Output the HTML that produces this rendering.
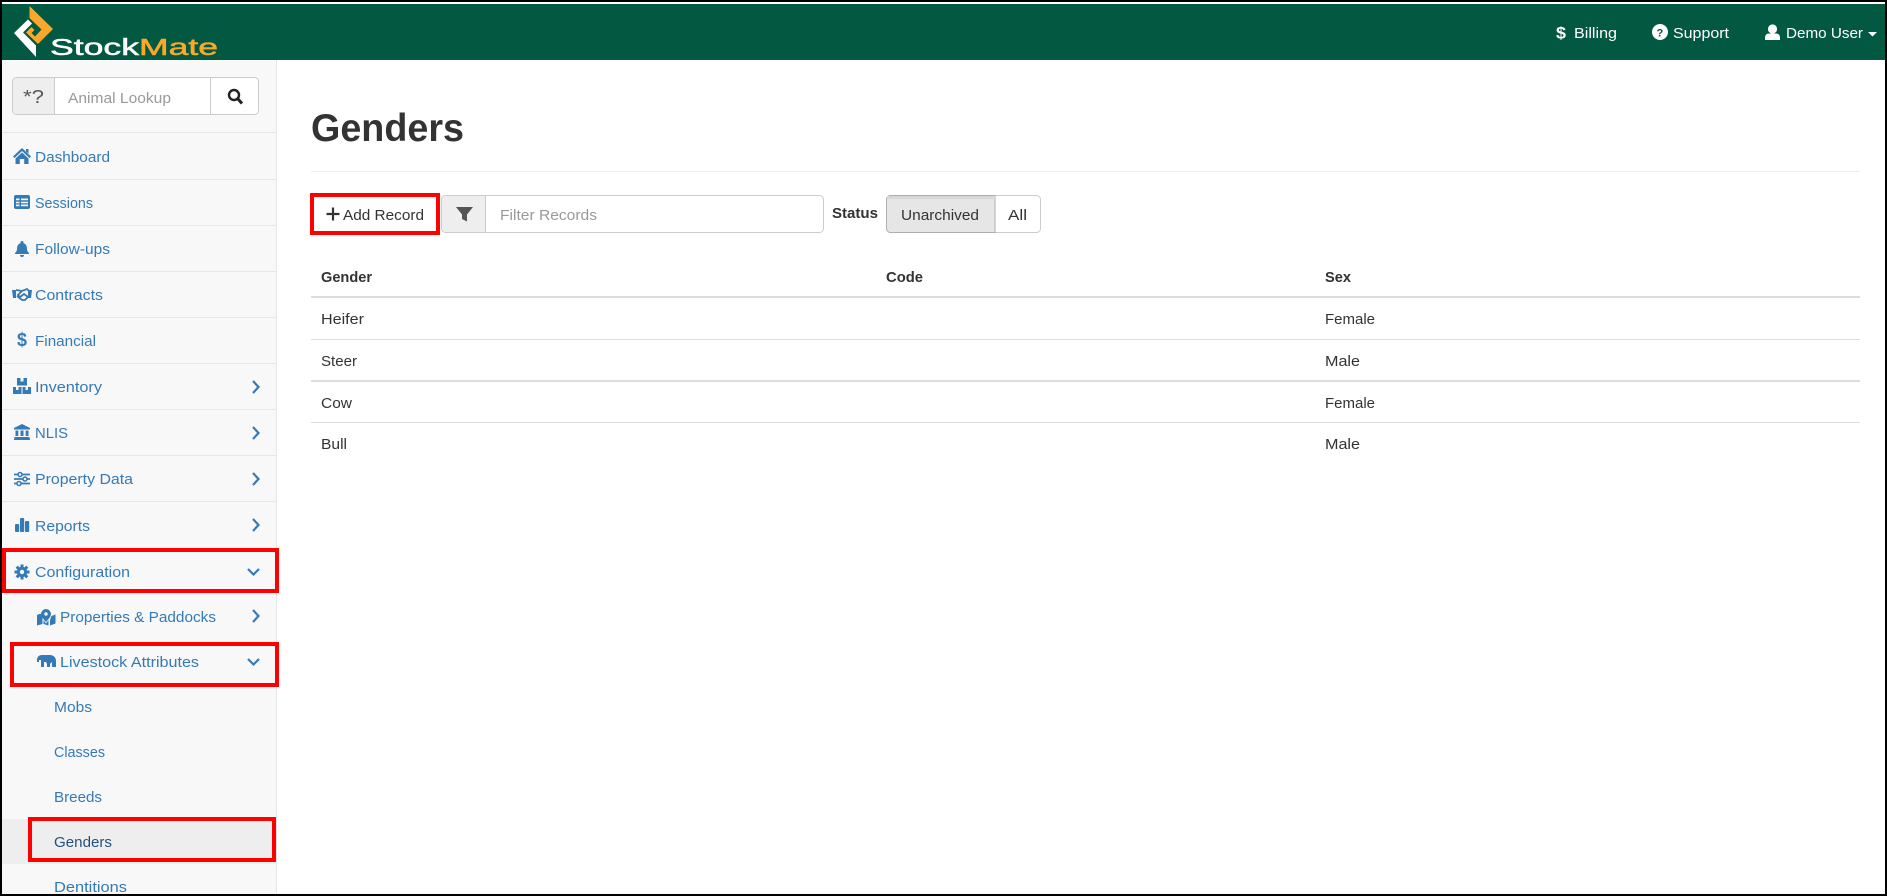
<!DOCTYPE html>
<html lang="en"><head><meta charset="utf-8"><title>Genders</title>
<style>
html,body{margin:0;padding:0;background:#fff;width:1887px;height:896px;overflow:hidden}
svg{display:block}
text{font-family:"Liberation Sans",sans-serif;font-size:15px;white-space:pre}
.n{fill:#337ab7}
.d{fill:#333}
.w{fill:#fff}
.p{fill:#999}
.b{font-weight:700}
.ic{fill:#337ab7}
.ch{fill:none;stroke:#337ab7;stroke-width:2.2}
.r{fill:none;stroke:#f00;stroke-width:4}
</style></head><body>
<svg width="1887" height="896" viewBox="0 0 1887 896" xmlns="http://www.w3.org/2000/svg">
<rect width="1887" height="896" fill="#fff"/>
<!-- header -->
<rect x="2" y="4" width="1883" height="56" fill="#025840"/>
<!-- logo -->
<path d="M29.500 6 L53 29 L38 44 L26 32.500 L31.500 27 L34.500 30 L31.500 33 L35 36.500 L41.500 29.500 L29.500 18 Z" fill="#f9a82b"/>
<path d="M14 33 L28 19.500 L32 23.500 L23 32.500 L36 45.500 L36 57 Z" fill="#fff"/>
<text x="50" y="55" class="w" stroke="#fff" stroke-width=".5" textLength="89" lengthAdjust="spacingAndGlyphs" style="font-size:23px">Stock</text>
<text x="139" y="55" fill="#f9a82b" stroke="#f9a82b" stroke-width=".5" textLength="79" lengthAdjust="spacingAndGlyphs" style="font-size:23px">Mate</text>
<!-- header nav -->
<text x="1556" y="38.500" class="w b" textLength="10" lengthAdjust="spacingAndGlyphs" style="font-size:17px">$</text>
<text x="1574" y="38" class="w" textLength="43" lengthAdjust="spacingAndGlyphs">Billing</text>
<circle cx="1660" cy="32" r="8" fill="#fff"/>
<text x="1656.500" y="36.500" fill="#025840" class="b" style="font-size:11px">?</text>
<text x="1673" y="38" class="w" textLength="56" lengthAdjust="spacingAndGlyphs">Support</text>
<circle cx="1772.500" cy="29" r="4.600" fill="#fff"/>
<path d="M1765 40 v-2 q0 -4.500 4 -4.500 h7 q4 0 4 4.500 v2 z" fill="#fff"/>
<text x="1786" y="38" class="w" textLength="77" lengthAdjust="spacingAndGlyphs">Demo User</text>
<path d="M1868 32 h9 l-4.500 4.500 z" fill="#fff"/>
<!-- sidebar -->
<rect x="2" y="60" width="274" height="834" fill="#f8f8f8"/>
<rect x="276" y="60" width="1" height="834" fill="#e7e7e7"/>
<g fill="#e7e7e7">
<rect x="2" y="132" width="274" height="1"/><rect x="2" y="179" width="274" height="1"/>
<rect x="2" y="225" width="274" height="1"/><rect x="2" y="271" width="274" height="1"/>
<rect x="2" y="317" width="274" height="1"/><rect x="2" y="363" width="274" height="1"/>
<rect x="2" y="409" width="274" height="1"/><rect x="2" y="455" width="274" height="1"/>
<rect x="2" y="501" width="274" height="1"/>
</g>
<!-- search -->
<rect x="12.500" y="77.500" width="246" height="37" rx="4" fill="#fff" stroke="#ccc"/>
<path d="M54 78 H16.500 a4 4 0 0 0 -3.500 3.500 V110 a4 4 0 0 0 3.500 4 H54 Z" fill="#eee"/>
<rect x="54" y="78" width="1" height="36" fill="#ccc"/>
<rect x="210" y="78" width="1" height="36" fill="#ccc"/>
<text x="23" y="103" fill="#555" textLength="21" lengthAdjust="spacingAndGlyphs" style="font-size:18px">*?</text>
<text x="68" y="103" class="p" textLength="103" lengthAdjust="spacingAndGlyphs">Animal Lookup</text>
<circle cx="234" cy="95" r="5" fill="none" stroke="#222" stroke-width="2.400"/>
<path d="M237.500 98.500 L242 103.500" stroke="#222" stroke-width="3" fill="none"/>
<!-- nav icons -->
<path class="ic" d="M22 148 L31 156.500 L29.500 158 L22 151 L14.500 158 L13 156.500 Z M26 149 H28.500 V153.500 L26 151.500 Z M22 152.500 L28.500 158.500 V164 H24.200 V159 H19.800 V164 H15.500 V158.500 Z"/>
<path class="ic" fill-rule="evenodd" d="M16 195 H28 a2 2 0 0 1 2 2 V207 a2 2 0 0 1 -2 2 H16 a2 2 0 0 1 -2 -2 V197 a2 2 0 0 1 2 -2 Z M16 198.500 V200.300 H19.500 V198.500 Z M21 198.500 V200.300 H28 V198.500 Z M16 201.700 V203.200 H19.500 V201.700 Z M21 201.700 V203.200 H28 V201.700 Z M16 204.500 V206.300 H19.500 V204.500 Z M21 204.500 V206.300 H28 V204.500 Z"/>
<path class="ic" d="M22 241 a1.500 1.500 0 0 1 1.500 1.500 V243.200 C26.500 244 27 247 27 249 C27 251 28 252 29 253 V254 H15 V253 C16 252 17 251 17 249 C17 247 17.500 244 20.500 243.200 V242.500 A1.500 1.500 0 0 1 22 241 Z M20 255 H24 a2 2 0 0 1 -4 0 Z"/>
<g fill="none" stroke="#337ab7" stroke-width="1.800"><path d="M16 290 L22 291 L27 289 L29 291 M22 291 L18 295 L20 297 L24 294 L28 297 L25 300 L22 300 L17 296"/></g>
<path class="ic" d="M12 290 H16 V298 H13 Z M32 290 H28 V298 H31 Z"/>
<text x="17" y="346" class="n b" textLength="10" lengthAdjust="spacingAndGlyphs" style="font-size:19px">$</text>
<path class="ic" d="M17 378 H20.500 V381.500 H23.500 V378 H27 V385.500 H17 Z M13 387 H16 V390 H18.500 V387 H21.500 V394 H13 Z M22.500 387 H25.500 V390 H28 V387 H31 V394 H22.500 Z"/>
<path class="ic" d="M22 424 L30 428 V429.500 H14 V428 Z M15.500 430.500 H18.300 V436 H15.500 Z M20.500 430.500 H23.500 V436 H20.500 Z M25.700 430.500 H28.500 V436 H25.700 Z M14.500 437 H29.500 V438.500 H30 V440 H14 V438.500 H14.500 Z"/>
<g fill="none" stroke="#337ab7" stroke-width="1.800"><path d="M14 474.500 H30 M14 479 H30 M14 483.500 H30"/></g>
<g fill="#f8f8f8" stroke="#337ab7" stroke-width="1.500"><circle cx="20" cy="474.500" r="2"/><circle cx="25" cy="479" r="2"/><circle cx="19" cy="483.500" r="2"/></g>
<rect class="ic" x="15" y="524" width="4.200" height="8" rx="1"/><rect class="ic" x="20" y="518" width="4.200" height="14" rx="1"/><rect class="ic" x="25" y="521" width="4.200" height="11" rx="1"/>
<g><circle cx="22" cy="572" r="5.200" fill="#337ab7"/>
<path d="M22 564.500 V579.500 M14.500 572 H29.500 M16.700 566.700 L27.300 577.300 M27.300 566.700 L16.700 577.300" stroke="#337ab7" stroke-width="3"/>
<circle cx="22" cy="572" r="2.200" fill="#f8f8f8"/></g>
<path class="ic" d="M46 609 a5 5 0 0 1 5 5 C51 617 47.500 620 46 622 C44.500 620 41 617 41 614 A5 5 0 0 1 46 609 Z M37 615 L40.500 613.500 L42.500 618 V624 L37 625.500 Z M51.500 616 L55.500 614.500 V623.500 L50 625.500 V620 Z M43.500 620 L46 623.500 L48.500 620 V625.500 L43.500 624 Z"/>
<circle cx="46" cy="614" r="1.700" fill="#f8f8f8"/>
<path class="ic" d="M37 660 C37 657 39 655 42 655 H50 C53 655 56 657 56 661 V667 H52 V662 L50 664 V667 H47 V664 L46 662 H44 V667 H41 V660 H39 V662 H37 Z"/>
<!-- nav text -->
<text x="35" y="162" class="n" textLength="75" lengthAdjust="spacingAndGlyphs">Dashboard</text>
<text x="35" y="208" class="n" textLength="58" lengthAdjust="spacingAndGlyphs">Sessions</text>
<text x="35" y="254" class="n" textLength="75" lengthAdjust="spacingAndGlyphs">Follow-ups</text>
<text x="35" y="300" class="n" textLength="68" lengthAdjust="spacingAndGlyphs">Contracts</text>
<text x="35" y="346" class="n" textLength="61" lengthAdjust="spacingAndGlyphs">Financial</text>
<text x="35" y="392" class="n" textLength="67" lengthAdjust="spacingAndGlyphs">Inventory</text>
<text x="35" y="438" class="n" textLength="33" lengthAdjust="spacingAndGlyphs">NLIS</text>
<text x="35" y="484" class="n" textLength="98" lengthAdjust="spacingAndGlyphs">Property Data</text>
<text x="35" y="531" class="n" textLength="55" lengthAdjust="spacingAndGlyphs">Reports</text>
<text x="35" y="577" class="n" textLength="95" lengthAdjust="spacingAndGlyphs">Configuration</text>
<text x="60" y="622" class="n" textLength="156" lengthAdjust="spacingAndGlyphs">Properties &amp; Paddocks</text>
<text x="60" y="667" class="n" textLength="139" lengthAdjust="spacingAndGlyphs">Livestock Attributes</text>
<text x="54" y="712" class="n" textLength="38" lengthAdjust="spacingAndGlyphs">Mobs</text>
<text x="54" y="757" class="n" textLength="51" lengthAdjust="spacingAndGlyphs">Classes</text>
<text x="54" y="802" class="n" textLength="48" lengthAdjust="spacingAndGlyphs">Breeds</text>
<rect x="2" y="819" width="274" height="45" fill="#eee"/>
<text x="54" y="847" fill="#23527c" textLength="58" lengthAdjust="spacingAndGlyphs">Genders</text>
<text x="54" y="892" class="n" textLength="73" lengthAdjust="spacingAndGlyphs">Dentitions</text>
<!-- chevrons -->
<path class="ch" d="M253 381 L258.500 387 L253 393"/>
<path class="ch" d="M253 427 L258.500 433 L253 439"/>
<path class="ch" d="M253 473 L258.500 479 L253 485"/>
<path class="ch" d="M253 519 L258.500 525 L253 531"/>
<path class="ch" d="M253 610 L258.500 616 L253 622"/>
<path class="ch" d="M248 569 L253.500 574.500 L259 569"/>
<path class="ch" d="M248 659 L253.500 664.500 L259 659"/>
<!-- red boxes sidebar -->
<rect class="r" x="4" y="550" width="273" height="41"/>
<rect class="r" x="12" y="644" width="265" height="41"/>
<rect class="r" x="30" y="819" width="244" height="41"/>
<!-- main -->
<text x="311" y="141" class="d b" textLength="153" lengthAdjust="spacingAndGlyphs" style="font-size:39px">Genders</text>
<rect x="311" y="171" width="1549" height="1" fill="#eee"/>
<!-- toolbar -->
<rect class="r" x="312" y="195" width="126" height="38"/>
<path d="M333 207.500 V220.500 M326.500 214 H339.500" stroke="#333" stroke-width="2.200" fill="none"/>
<text x="343" y="220" class="d" textLength="81" lengthAdjust="spacingAndGlyphs">Add Record</text>
<rect x="441.500" y="195.500" width="382" height="37" rx="4" fill="#fff" stroke="#ccc"/>
<path d="M485 196 H446 a4 4 0 0 0 -4 4 V228 a4 4 0 0 0 4 4 H485 Z" fill="#eee"/>
<rect x="485" y="196" width="1" height="36" fill="#ccc"/>
<path d="M456 207 H473 L467 214.500 V221.500 L462 219 V214.500 Z" fill="#555"/>
<text x="500" y="220" class="p" textLength="97" lengthAdjust="spacingAndGlyphs">Filter Records</text>
<text x="832" y="218" class="d b" textLength="46" lengthAdjust="spacingAndGlyphs">Status</text>
<rect x="886.500" y="195.500" width="154" height="37" rx="4" fill="#fff" stroke="#ccc"/>
<path d="M995 195.500 H890.500 a4 4 0 0 0 -4 4 V228.500 a4 4 0 0 0 4 4 H995 Z" fill="#e6e6e6" stroke="#adadad"/>
<rect x="887" y="196" width="108" height="3" fill="#d8d8d8"/>
<text x="901" y="220" class="d" textLength="78" lengthAdjust="spacingAndGlyphs">Unarchived</text>
<text x="1008" y="220" class="d" textLength="19" lengthAdjust="spacingAndGlyphs">All</text>
<!-- table -->
<text x="321" y="282" class="d b" textLength="51" lengthAdjust="spacingAndGlyphs">Gender</text>
<text x="886" y="282" class="d b" textLength="37" lengthAdjust="spacingAndGlyphs">Code</text>
<text x="1325" y="282" class="d b" textLength="26" lengthAdjust="spacingAndGlyphs">Sex</text>
<rect x="311" y="296" width="1549" height="2" fill="#ddd"/>
<text x="321" y="324" class="d" textLength="43" lengthAdjust="spacingAndGlyphs">Heifer</text>
<text x="1325" y="324" class="d" textLength="50" lengthAdjust="spacingAndGlyphs">Female</text>
<rect x="311" y="339" width="1549" height="1" fill="#ddd"/>
<text x="321" y="366" class="d" textLength="36" lengthAdjust="spacingAndGlyphs">Steer</text>
<text x="1325" y="366" class="d" textLength="35" lengthAdjust="spacingAndGlyphs">Male</text>
<rect x="311" y="380" width="1549" height="2" fill="#ddd"/>
<text x="321" y="408" class="d" textLength="31" lengthAdjust="spacingAndGlyphs">Cow</text>
<text x="1325" y="408" class="d" textLength="50" lengthAdjust="spacingAndGlyphs">Female</text>
<rect x="311" y="422" width="1549" height="1" fill="#ddd"/>
<text x="321" y="449" class="d" textLength="26" lengthAdjust="spacingAndGlyphs">Bull</text>
<text x="1325" y="449" class="d" textLength="35" lengthAdjust="spacingAndGlyphs">Male</text>
<!-- outer frame -->
<rect x="0" y="0" width="1887" height="2" fill="#000"/>
<rect x="0" y="0" width="2" height="896" fill="#000"/>
<rect x="1885" y="0" width="2" height="896" fill="#000"/>
<rect x="0" y="894" width="1887" height="2" fill="#000"/>
</svg>
</body></html>
